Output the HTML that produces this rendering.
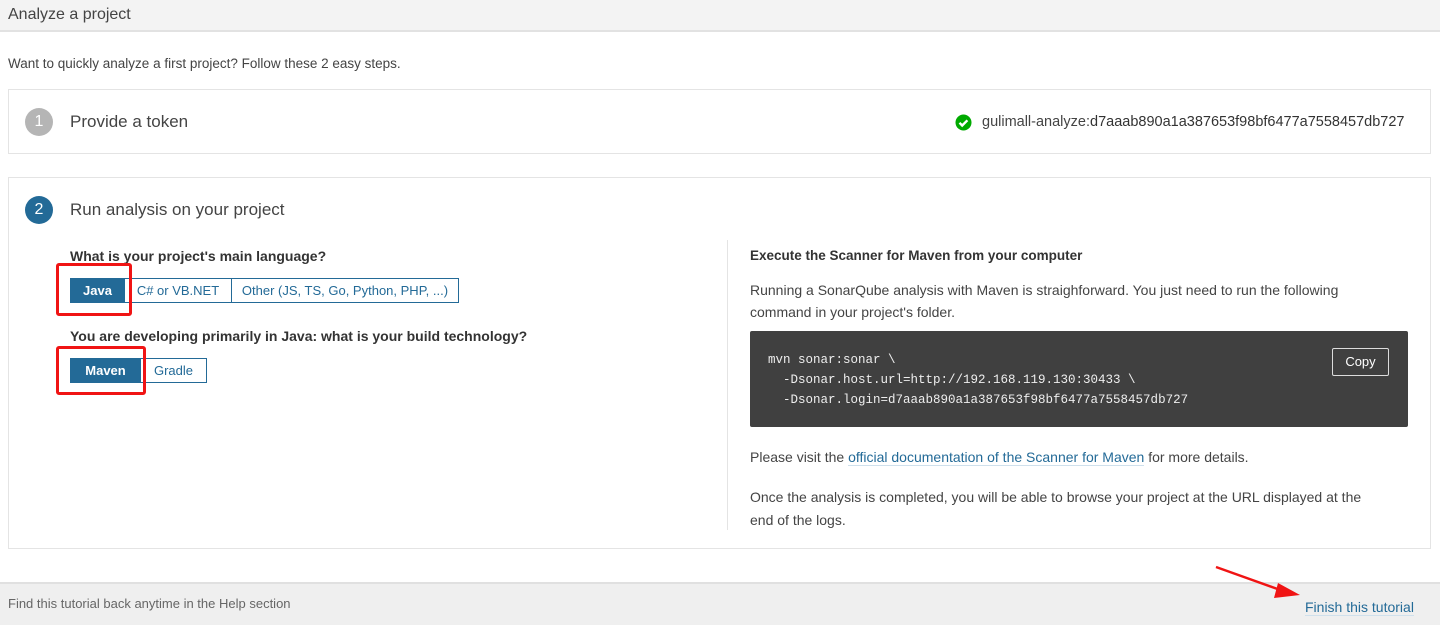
<!DOCTYPE html>
<html><head><meta charset="utf-8"><style>
*{margin:0;padding:0;box-sizing:border-box}
body{width:1440px;height:625px;position:relative;overflow:hidden;background:#fff;font-family:"Liberation Sans",sans-serif;color:#444;font-size:13px}
.a{position:absolute;white-space:nowrap}
.card{position:absolute;border:1px solid #e4e4e4;background:#fff}
.num{position:absolute;width:28px;height:28px;border-radius:50%;color:#fff;font-size:16px;text-align:center;line-height:28px}
.btn{position:absolute;height:25px;line-height:23px;font-size:13px;text-align:center;border:1px solid #236a97;color:#236a97;background:#fff}
.sel{background:#236a97;color:#fff;font-weight:bold}
.red{position:absolute;border:3px solid #f01414;border-radius:3px}
.mono{font-family:"Liberation Mono",monospace;font-size:12.5px;color:#eee}
</style></head><body>
<div class="a" style="left:0;top:0;width:1440px;height:32px;background:#f3f3f3;border-bottom:2px solid #e2e2e2"></div>
<div class="a" style="left:8px;top:6px;font-size:16px;color:#444">Analyze a project</div>
<div class="a" style="left:8px;top:56px;font-size:13.5px">Want to quickly analyze a first project? Follow these 2 easy steps.</div>

<div class="card" style="left:8px;top:89px;width:1423px;height:65px"></div>
<div class="num" style="left:25px;top:108px;background:#b5b5b5">1</div>
<div class="a" style="left:70px;top:112px;font-size:17px">Provide a token</div>
<svg class="a" style="left:955px;top:114px" width="17" height="17" viewBox="0 0 17 17"><circle cx="8.5" cy="8.5" r="8" fill="#00aa00"/><path d="M4.5 8.8l2.7 2.7 5.2-5.2" stroke="#fff" stroke-width="2.4" fill="none"/></svg>
<div class="a" style="left:982px;top:114px;font-size:14.5px">gulimall-analyze:<span style="color:#333">d7aaab890a1a387653f98bf6477a7558457db727</span></div>

<div class="card" style="left:8px;top:177px;width:1423px;height:372px"></div>
<div class="num" style="left:25px;top:196px;background:#236a97">2</div>
<div class="a" style="left:70px;top:200px;font-size:17px">Run analysis on your project</div>

<div class="a" style="left:70px;top:248px;font-size:14px;font-weight:bold;color:#333">What is your project's main language?</div>
<div class="btn sel" style="left:70px;top:278px;width:55px">Java</div>
<div class="btn" style="left:124px;top:278px;width:108px">C# or VB.NET</div>
<div class="btn" style="left:231px;top:278px;width:228px">Other (JS, TS, Go, Python, PHP, ...)</div>
<div class="red" style="left:56px;top:263px;width:76px;height:53px"></div>

<div class="a" style="left:70px;top:328px;font-size:14px;font-weight:bold;color:#333">You are developing primarily in Java: what is your build technology?</div>
<div class="btn sel" style="left:70px;top:358px;width:71px">Maven</div>
<div class="btn" style="left:140px;top:358px;width:67px">Gradle</div>
<div class="red" style="left:56px;top:346px;width:90px;height:49px"></div>

<div class="a" style="left:727px;top:240px;width:1px;height:290px;background:#e4e4e4"></div>

<div class="a" style="left:750px;top:248px;font-size:13.5px;font-weight:bold;color:#333">Execute the Scanner for Maven from your computer</div>
<div class="a" style="left:750px;top:279px;font-size:14px;line-height:22px;white-space:normal;width:650px">Running a SonarQube analysis with Maven is straighforward. You just need to run the following command in your project's folder.</div>
<div class="a" style="left:750px;top:331px;width:658px;height:96px;background:#404040;border-radius:2px"></div>
<div class="a mono" style="left:768px;top:350px;line-height:20px">mvn sonar:sonar \<br>&nbsp;&nbsp;-Dsonar.host.url=http://192.168.119.130:30433 \<br>&nbsp;&nbsp;-Dsonar.login=d7aaab890a1a387653f98bf6477a7558457db727</div>
<div class="a" style="left:1332px;top:348px;width:57px;height:28px;border:1px solid #ddd;border-radius:2px;color:#fff;font-size:13px;text-align:center;line-height:26px">Copy</div>
<div class="a" style="left:750px;top:449px;font-size:14px">Please visit the <span style="color:#236a97;border-bottom:1px solid #cfe0ec">official documentation of the Scanner for Maven</span> for more details.</div>
<div class="a" style="left:750px;top:486px;font-size:14px;line-height:23px;white-space:normal;width:630px">Once the analysis is completed, you will be able to browse your project at the URL displayed at the end of the logs.</div>

<div class="a" style="left:0;top:582px;width:1440px;height:43px;background:#efefef;border-top:2px solid #e0e0e0"></div>
<div class="a" style="left:8px;top:596px;font-size:13px;color:#666">Find this tutorial back anytime in the Help section</div>
<div class="a" style="left:1305px;top:599px;font-size:14px;color:#236a97;border-bottom:1px solid #cfe0ec">Finish this tutorial</div>
<svg class="a" style="left:1210px;top:562px" width="95" height="40" viewBox="0 0 95 40"><path d="M6 5 L76 30" stroke="#f01414" stroke-width="2.5"/><path d="M68 21 L90 33 L64 36 Z" fill="#f01414"/></svg>
</body></html>
